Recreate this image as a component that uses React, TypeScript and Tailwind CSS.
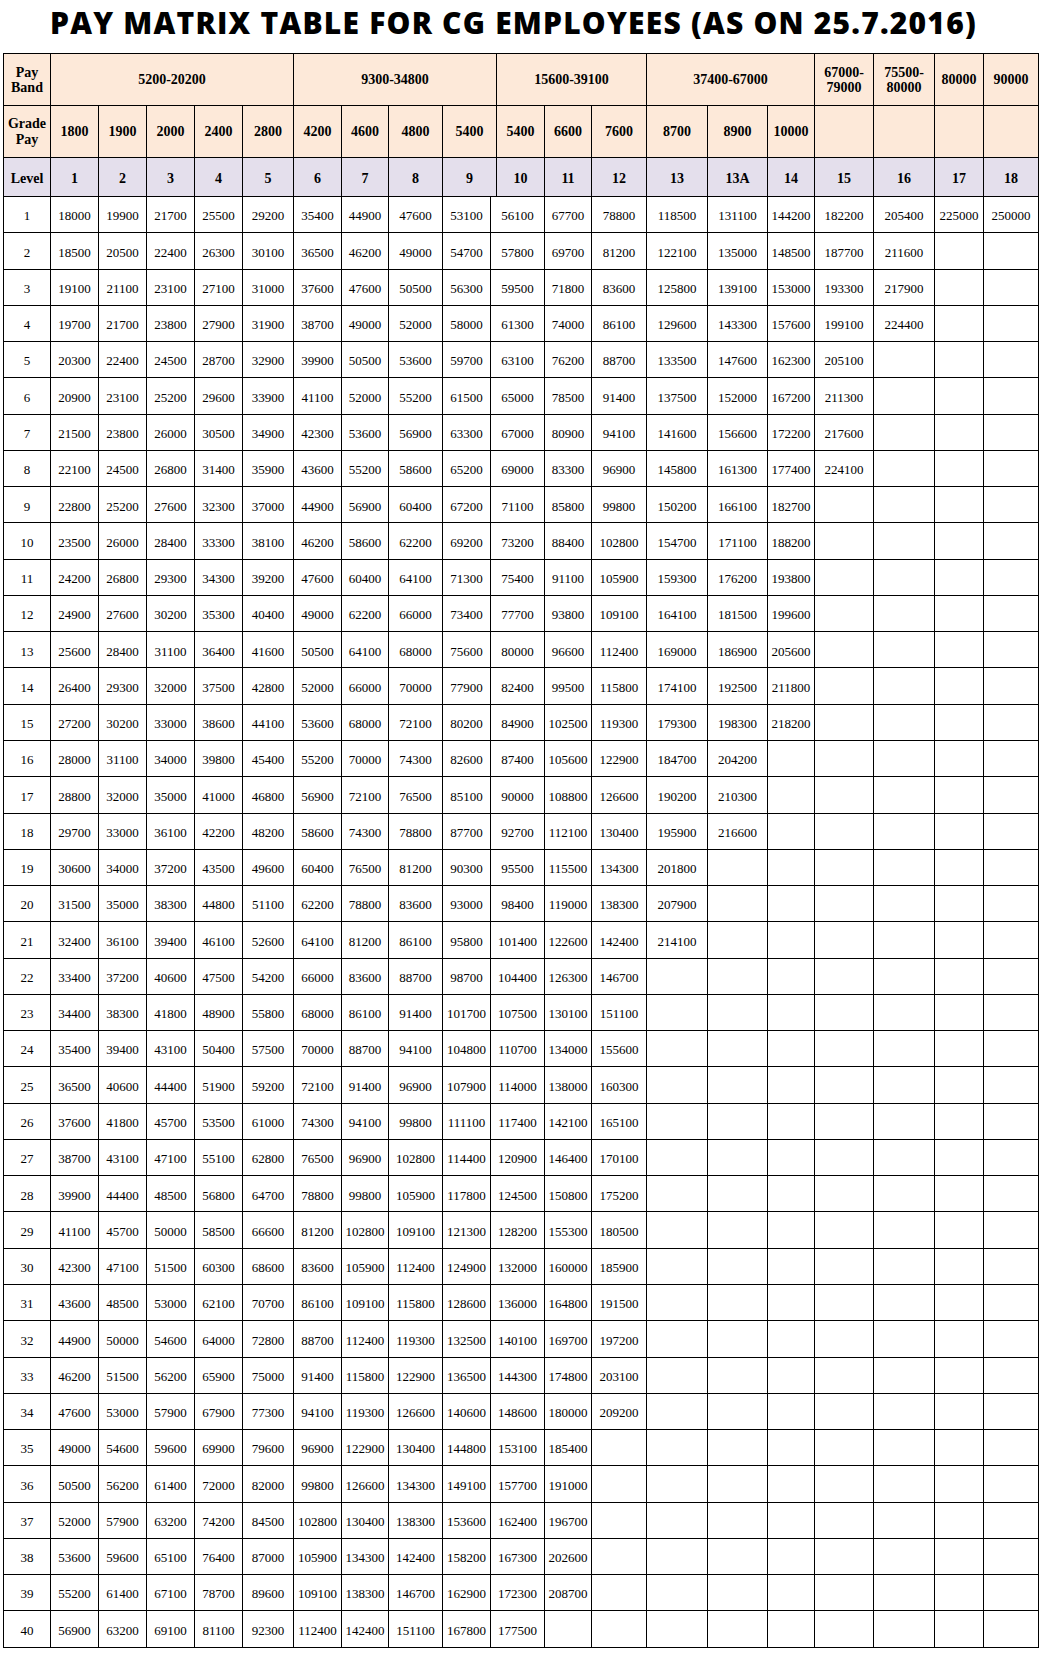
const levels = ['1', '2', '3', '4', '5', '6', '7', '8', '9', '10', '11', '12', '13', '13A', '14', '15', '16', '17', '18'];

const gradePay = ['1800', '1900', '2000', '2400', '2800', '4200', '4600', '4800', '5400', '5400', '6600', '7600', '8700', '8900', '10000', '', '', '', ''];

// rows 1-40 for levels 1-9
const lowRows = [
  [18000, 19900, 21700, 25500, 29200, 35400, 44900, 47600, 53100],
  [18500, 20500, 22400, 26300, 30100, 36500, 46200, 49000, 54700],
  [19100, 21100, 23100, 27100, 31000, 37600, 47600, 50500, 56300],
  [19700, 21700, 23800, 27900, 31900, 38700, 49000, 52000, 58000],
  [20300, 22400, 24500, 28700, 32900, 39900, 50500, 53600, 59700],
  [20900, 23100, 25200, 29600, 33900, 41100, 52000, 55200, 61500],
  [21500, 23800, 26000, 30500, 34900, 42300, 53600, 56900, 63300],
  [22100, 24500, 26800, 31400, 35900, 43600, 55200, 58600, 65200],
  [22800, 25200, 27600, 32300, 37000, 44900, 56900, 60400, 67200],
  [23500, 26000, 28400, 33300, 38100, 46200, 58600, 62200, 69200],
  [24200, 26800, 29300, 34300, 39200, 47600, 60400, 64100, 71300],
  [24900, 27600, 30200, 35300, 40400, 49000, 62200, 66000, 73400],
  [25600, 28400, 31100, 36400, 41600, 50500, 64100, 68000, 75600],
  [26400, 29300, 32000, 37500, 42800, 52000, 66000, 70000, 77900],
  [27200, 30200, 33000, 38600, 44100, 53600, 68000, 72100, 80200],
  [28000, 31100, 34000, 39800, 45400, 55200, 70000, 74300, 82600],
  [28800, 32000, 35000, 41000, 46800, 56900, 72100, 76500, 85100],
  [29700, 33000, 36100, 42200, 48200, 58600, 74300, 78800, 87700],
  [30600, 34000, 37200, 43500, 49600, 60400, 76500, 81200, 90300],
  [31500, 35000, 38300, 44800, 51100, 62200, 78800, 83600, 93000],
  [32400, 36100, 39400, 46100, 52600, 64100, 81200, 86100, 95800],
  [33400, 37200, 40600, 47500, 54200, 66000, 83600, 88700, 98700],
  [34400, 38300, 41800, 48900, 55800, 68000, 86100, 91400, 101700],
  [35400, 39400, 43100, 50400, 57500, 70000, 88700, 94100, 104800],
  [36500, 40600, 44400, 51900, 59200, 72100, 91400, 96900, 107900],
  [37600, 41800, 45700, 53500, 61000, 74300, 94100, 99800, 111100],
  [38700, 43100, 47100, 55100, 62800, 76500, 96900, 102800, 114400],
  [39900, 44400, 48500, 56800, 64700, 78800, 99800, 105900, 117800],
  [41100, 45700, 50000, 58500, 66600, 81200, 102800, 109100, 121300],
  [42300, 47100, 51500, 60300, 68600, 83600, 105900, 112400, 124900],
  [43600, 48500, 53000, 62100, 70700, 86100, 109100, 115800, 128600],
  [44900, 50000, 54600, 64000, 72800, 88700, 112400, 119300, 132500],
  [46200, 51500, 56200, 65900, 75000, 91400, 115800, 122900, 136500],
  [47600, 53000, 57900, 67900, 77300, 94100, 119300, 126600, 140600],
  [49000, 54600, 59600, 69900, 79600, 96900, 122900, 130400, 144800],
  [50500, 56200, 61400, 72000, 82000, 99800, 126600, 134300, 149100],
  [52000, 57900, 63200, 74200, 84500, 102800, 130400, 138300, 153600],
  [53600, 59600, 65100, 76400, 87000, 105900, 134300, 142400, 158200],
  [55200, 61400, 67100, 78700, 89600, 109100, 138300, 146700, 162900],
  [56900, 63200, 69100, 81100, 92300, 112400, 142400, 151100, 167800],
];

// levels 10 onwards, each column runs down as far as it goes
const highCols = [
  [56100, 57800, 59500, 61300, 63100, 65000, 67000, 69000, 71100, 73200, 75400, 77700, 80000, 82400, 84900, 87400, 90000, 92700, 95500, 98400, 101400, 104400, 107500, 110700, 114000, 117400, 120900, 124500, 128200, 132000, 136000, 140100, 144300, 148600, 153100, 157700, 162400, 167300, 172300, 177500],
  [67700, 69700, 71800, 74000, 76200, 78500, 80900, 83300, 85800, 88400, 91100, 93800, 96600, 99500, 102500, 105600, 108800, 112100, 115500, 119000, 122600, 126300, 130100, 134000, 138000, 142100, 146400, 150800, 155300, 160000, 164800, 169700, 174800, 180000, 185400, 191000, 196700, 202600, 208700],
  [78800, 81200, 83600, 86100, 88700, 91400, 94100, 96900, 99800, 102800, 105900, 109100, 112400, 115800, 119300, 122900, 126600, 130400, 134300, 138300, 142400, 146700, 151100, 155600, 160300, 165100, 170100, 175200, 180500, 185900, 191500, 197200, 203100, 209200],
  [118500, 122100, 125800, 129600, 133500, 137500, 141600, 145800, 150200, 154700, 159300, 164100, 169000, 174100, 179300, 184700, 190200, 195900, 201800, 207900, 214100],
  [131100, 135000, 139100, 143300, 147600, 152000, 156600, 161300, 166100, 171100, 176200, 181500, 186900, 192500, 198300, 204200, 210300, 216600],
  [144200, 148500, 153000, 157600, 162300, 167200, 172200, 177400, 182700, 188200, 193800, 199600, 205600, 211800, 218200],
  [182200, 187700, 193300, 199100, 205100, 211300, 217600, 224100],
  [205400, 211600, 217900, 224400],
  [225000],
  [250000],
];

const cell = 'flex items-center justify-center text-center border-r border-b border-black';

export default function App() {
  const rows = lowRows.map((low, i) => [...low, ...highCols.map((col) => col[i])]);

  return (
    <div className="w-[1043px] h-[1655px] bg-white text-black">
      <div className="h-[53px] pt-[8px] pr-4 text-center [font-family:'Open_Sans',sans-serif] font-extrabold text-[30px] leading-[30px] tracking-[1.2px] whitespace-nowrap">
        PAY MATRIX TABLE FOR CG EMPLOYEES (AS ON 25.7.2016)
      </div>

      <div className="ml-[3px] w-[1036px] [font-family:'Liberation_Serif','Times_New_Roman',serif]">
        {/* Header */}
        <div className="grid grid-cols-[47px_48px_48px_48px_48px_51px_48px_47px_54px_54px_48px_47px_55px_61px_60px_47px_59px_61px_49px_55px] grid-rows-[52px_52px_39px] border-l border-t border-black font-bold text-[14px]">
          <div className={`${cell} bg-[#fde9d9] leading-[15px]`}>Pay<br />Band</div>
          <div className={`${cell} bg-[#fde9d9] col-span-5`}>5200-20200</div>
          <div className={`${cell} bg-[#fde9d9] col-span-4`}>9300-34800</div>
          <div className={`${cell} bg-[#fde9d9] col-span-3`}>15600-39100</div>
          <div className={`${cell} bg-[#fde9d9] col-span-3`}>37400-67000</div>
          <div className={`${cell} bg-[#fde9d9] leading-[15px]`}>67000-<br />79000</div>
          <div className={`${cell} bg-[#fde9d9] leading-[15px]`}>75500-<br />80000</div>
          <div className={`${cell} bg-[#fde9d9]`}>80000</div>
          <div className={`${cell} bg-[#fde9d9]`}>90000</div>

          <div className={`${cell} bg-[#fde9d9] leading-[16px]`}>Grade<br />Pay</div>
          {gradePay.map((g, i) => (
            <div key={i} className={`${cell} bg-[#fde9d9]`}>{g}</div>
          ))}

          <div className={`${cell} bg-[#e4dfec] pt-[3px]`}>Level</div>
          {levels.map((l) => (
            <div key={l} className={`${cell} bg-[#e4dfec] pt-[3px]`}>{l}</div>
          ))}
        </div>

        {/* Pay figures */}
        <div className="grid grid-cols-[47px_48px_48px_48px_48px_51px_48px_47px_54px_48px_54px_47px_55px_61px_60px_47px_59px_61px_49px_55px] auto-rows-[36.275px] border-l border-black text-[13px]">
          {rows.map((row, i) => (
            <div key={i} className="contents">
              <div className={`${cell} pt-[3px]`}>{i + 1}</div>
              {row.map((v, j) => (
                <div key={j} className={`${cell} pt-[3px]`}>{v ?? ''}</div>
              ))}
            </div>
          ))}
        </div>
      </div>
    </div>
  );
}
